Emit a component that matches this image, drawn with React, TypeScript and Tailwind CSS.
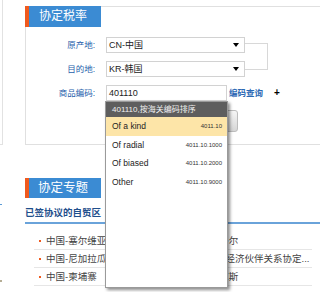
import React from "react";

function Select({ value }: { value: string }) {
  return (
    <div className="w-[139px] h-[16px] border border-[#d2d2d2] bg-white flex items-center justify-between pl-[2px] pr-[5px]">
      <span className="text-[9px] leading-none text-[#222]">{value}</span>
      <span className="w-0 h-0 border-l-[3px] border-r-[3px] border-t-[4px] border-l-transparent border-r-transparent border-t-black" />
    </div>
  );
}

function Label({ children }: { children: React.ReactNode }) {
  return (
    <div className="w-[70px] text-right text-[8.5px] leading-none text-[#2660ab] pr-[1px]">{children}</div>
  );
}

function ListRow({ text }: { text: string }) {
  return (
    <div className="h-[18px] border-b border-[#e6e6e6] flex items-center">
      <span className="ml-[5px] w-[2px] h-[2px] bg-[#f05a1e] shrink-0" />
      <span className="ml-[5px] text-[9.5px] leading-none text-[#444] whitespace-nowrap">{text}</span>
    </div>
  );
}

function Item({ name, code, active }: { name: string; code: string; active?: boolean }) {
  return (
    <div className={"h-[18.5px] flex items-center justify-between pl-[6px] pr-[5px] " + (active ? "bg-[#fde5a8]" : "bg-white")}>
      <span className="text-[8.5px] leading-none text-[#222]">{name}</span>
      <span className="text-[6px] leading-none text-[#333]">{code}</span>
    </div>
  );
}

export default function App() {
  return (
    <div className="relative w-[320px] h-[292px] overflow-hidden bg-white font-['Liberation_Sans','Noto_Sans_CJK_SC',sans-serif]">
      <div className="flex">
        <div className="w-[3px] shrink-0 flex flex-col">
          <div className="h-[145px] border-r border-b border-[#e2e2e2]" />
          <div className="mt-[59px] h-px w-[2px] bg-[#5b9bd5]" />
          <div className="mt-[75px] h-[2px] w-[2px] bg-[#b5ad95]" />
        </div>
        <div className="ml-[22px] flex-1 min-w-0 pt-[6px]">
          {/* Card 1 */}
          <div className="h-[139px] border-t border-l border-b border-[#e0e0e0]">
            <div className="flex h-[21px] -mt-px -ml-px">
              <div className="w-[4px] bg-[#f05a1e]" />
              <div className="w-[72px] bg-[#3b8bd3] text-white text-[12px] leading-[21px] pl-[10px]">协定税率</div>
            </div>
            <div className="mt-[10px] flex">
              <div className="flex flex-col gap-[8px]">
                <div className="flex items-center">
                  <Label>原产地:</Label>
                  <div className="ml-[10px]"><Select value="CN-中国" /></div>
                </div>
                <div className="flex items-center">
                  <Label>目的地:</Label>
                  <div className="ml-[10px]"><Select value="KR-韩国" /></div>
                </div>
              </div>
              <div className="mt-[6px] w-[23px] h-[27px] border-t border-r border-b border-[#d8d8d8]" />
            </div>
            <div className="mt-[8px] flex items-center">
              <Label>商品编码:</Label>
              <div className="ml-[10px] w-[121px] h-[16px] border border-[#d2d2d2] flex items-center pl-[2px]">
                <span className="text-[9px] leading-none text-[#222]">401110</span>
              </div>
              <span className="ml-[2px] text-[8.5px] leading-none text-[#2a68b3] font-semibold">编码查询</span>
              <span className="ml-[11px] text-[10px] leading-none text-black font-bold">+</span>
            </div>
            <div className="mt-[9px] ml-[124px] w-[88px] h-[22px] rounded-[3px] border border-[#bdbdbd] bg-gradient-to-b from-[#f6f6f6] to-[#d6d6d6] flex items-center justify-center text-[9px] text-[#333]">
              查询
            </div>
          </div>

          {/* Section 2 */}
          <div className="mt-[33px] flex h-[20px]">
            <div className="w-[4px] bg-[#f05a1e]" />
            <div className="w-[72px] bg-[#3b8bd3] text-white text-[12.5px] leading-[20px] pl-[9px]">协定专题</div>
          </div>
          <div className="mt-[8px] h-[14px] text-[9.5px] leading-[14px] font-bold text-[#1f4f8c]">已签协议的自贸区</div>
          <div className="mt-[2px] h-[2px] bg-[#6aa3da]" />
          <div className="mt-[8px] ml-[9px] mr-[8px] flex">
            <div className="w-[126px] mr-[6px] flex flex-col">
              <ListRow text="中国-塞尔维亚" />
              <ListRow text="中国-尼加拉瓜" />
              <ListRow text="中国-柬埔寨" />
            </div>
            <div className="flex-1 min-w-0 flex flex-col">
              <ListRow text="中国-厄瓜多尔" />
              <ListRow text="《区域全面经济伙伴关系协定..." />
              <ListRow text="中国-毛里求斯" />
            </div>
          </div>
        </div>
      </div>

      {/* Dropdown */}
      <div className="absolute left-[105px] top-[101px] w-[123px] h-[187px] border border-[#9a9a9a] bg-white shadow-[2px_2px_3px_rgba(0,0,0,0.45)] flex flex-col">
        <div className="h-[15px] bg-[#5e5e5e] flex items-center pl-[6px]">
          <span className="text-[8px] leading-none text-[#f0f0f0]">401110,按海关编码排序</span>
        </div>
        <Item name="Of a kind" code="4011.10" active />
        <Item name="Of radial" code="4011.10.1000" />
        <Item name="Of biased" code="4011.10.2000" />
        <Item name="Other" code="4011.10.9000" />
      </div>
    </div>
  );
}
